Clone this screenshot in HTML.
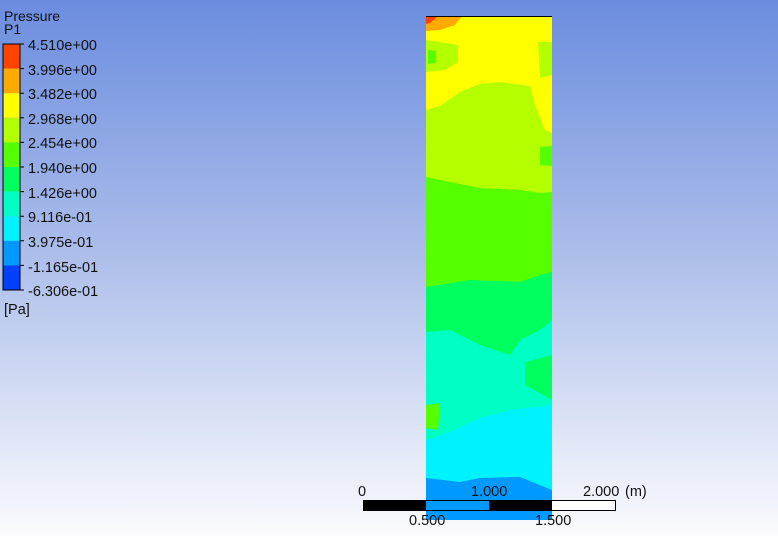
<!DOCTYPE html>
<html><head><meta charset="utf-8"><style>
body{margin:0;width:778px;height:536px;overflow:hidden;background:linear-gradient(#6b8ddf 0%,#a9bbe9 45%,#dde4f6 80%,#fbfbfe 100%);font-family:"Liberation Sans",sans-serif;color:#111;position:relative}
.t{position:absolute;font-size:14px;line-height:14px}
</style></head><body>
<div class="t" style="left:4px;top:9px">Pressure</div>
<div class="t" style="left:4px;top:22px">P1</div>
<svg width="778" height="536" style="position:absolute;left:0;top:0">
<g>
<rect x="3" y="44" width="17" height="24.6" fill="#ff4400"/>
<rect x="3" y="68.6" width="17" height="24.6" fill="#ffaa00"/>
<rect x="3" y="93.2" width="17" height="24.6" fill="#ffff00"/>
<rect x="3" y="117.8" width="17" height="24.6" fill="#b4ff00"/>
<rect x="3" y="142.4" width="17" height="24.6" fill="#55ff00"/>
<rect x="3" y="167" width="17" height="24.6" fill="#00ff5e"/>
<rect x="3" y="191.6" width="17" height="24.6" fill="#00ffc4"/>
<rect x="3" y="216.2" width="17" height="24.6" fill="#00f2ff"/>
<rect x="3" y="240.8" width="17" height="24.6" fill="#0099ff"/>
<rect x="3" y="265.4" width="17" height="24.6" fill="#0040ff"/>
<rect x="3" y="44" width="17" height="246" fill="none" stroke="#000" stroke-width="1"/>
</g>
<g stroke="#000"><path d="M20 44h4M20 68.6h4M20 93.2h4M20 117.8h4M20 142.4h4M20 167h4M20 191.6h4M20 216.2h4M20 240.8h4M20 265.4h4M20 290h4"/></g>
<g font-family="Liberation Sans" font-size="14.5" fill="#111">
<text x="28" y="50">4.510e+00</text><text x="28" y="75">3.996e+00</text><text x="28" y="99">3.482e+00</text><text x="28" y="124">2.968e+00</text><text x="28" y="148">2.454e+00</text><text x="28" y="173">1.940e+00</text><text x="28" y="198">1.426e+00</text><text x="28" y="222">9.116e-01</text><text x="28" y="247">3.975e-01</text><text x="28" y="272">-1.165e-01</text><text x="28" y="296">-6.306e-01</text>
<text x="4" y="314">[Pa]</text>
</g>
<rect x="426" y="16" width="126" height="504" fill="#0099ff"/>
<polygon fill="#00f2ff" points="426,16 552,16 552,490 520,477 480,478 460,482 426,478"/>
<polygon fill="#00ffc4" points="426,16 552,16 552,405 510,410 480,418 450,432 426,440"/>
<polygon fill="#00ff5e" points="426,16 552,16 552,320 540,330 520,340 510,355 480,345 450,330 426,332"/>
<polygon fill="#55ff00" points="426,16 552,16 552,272 540,275 520,282 470,280 426,287"/>
<polygon fill="#b4ff00" points="426,16 552,16 552,192 540,193 520,190 480,188 450,182 426,177"/>
<polygon fill="#ffff00" points="426,16 552,16 552,133 545,130 535,105 530,86 500,82 480,84 460,92 440,106 426,110"/>
<polygon fill="#b4ff00" points="426,40 458,45 458,62 445,70 426,72"/>
<polygon fill="#55ff00" points="428,50 436,51 436,63 428,64"/>
<polygon fill="#b4ff00" points="538,42 552,42 552,75 540,78"/>
<polygon fill="#55ff00" points="540,147 552,146 552,166 540,165"/>
<polygon fill="#00ff5e" points="525,362 552,355 552,400 525,385"/>
<polygon fill="#55ff00" points="426,405 440,403 438,430 426,428"/>
<polygon fill="#ffaa00" points="426,16 462,16 455,25 440,30 426,31"/>
<polygon fill="#ff4400" points="426,16 438,16 430,23 426,24"/>
<line x1="426" y1="16.5" x2="552" y2="16.5" stroke="#000"/>
<rect x="363" y="500" width="63" height="10" fill="#000"/>
<rect x="489" y="500" width="63" height="10" fill="#000"/>
<rect x="552" y="500" width="63" height="10" fill="#fff"/>
<rect x="363.5" y="500.5" width="252" height="10" fill="none" stroke="#000"/>
<g font-family="Liberation Sans" font-size="14.5" fill="#111">
<text x="358" y="496">0</text><text x="471" y="496">1.000</text><text x="583" y="496">2.000</text><text x="625" y="496">(m)</text>
<text x="409" y="525">0.500</text><text x="535" y="525">1.500</text>
</g>
</svg>
</body></html>
